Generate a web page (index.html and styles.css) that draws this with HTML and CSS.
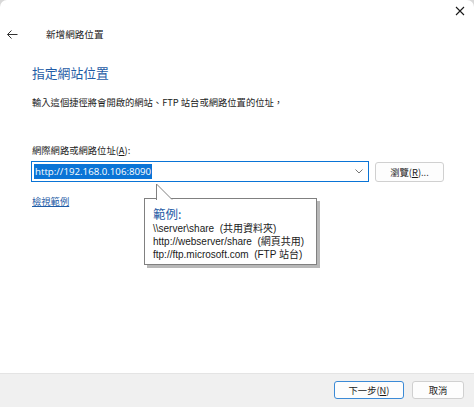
FILE: index.html
```html
<!DOCTYPE html>
<html lang="zh-Hant">
  <head>
    <meta charset="UTF-8" />
    <meta name="viewport" content="width=device-width, initial-scale=1.0" />
    <title>新增網路位置</title>
    <link rel="stylesheet" href="styles.css">
  </head>
  <body>
    <div class="window">
      <div class="titlebar">
        <button class="close-btn" aria-label="關閉">
          <svg width="10" height="10" viewBox="0 0 10 10">
            <path d="M1 1 L9 9 M9 1 L1 9" stroke="#1a1a1a" stroke-width="1.1" fill="none" />
          </svg>
        </button>
      </div>

      <div class="nav">
        <span class="back">
          <svg width="11" height="9" viewBox="0 0 11 9">
            <path d="M0.5 4.5 H10.5 M4.5 0.5 L0.5 4.5 L4.5 8.5" stroke="#333" stroke-width="1" fill="none" />
          </svg>
        </span>
        <span class="nav-title">新增網路位置</span>
      </div>

      <main class="content">
        <h1 class="heading">指定網站位置</h1>
        <p class="desc">輸入這個捷徑將會開啟的網站、FTP 站台或網路位置的位址，</p>

        <label class="label">網際網路或網路位址(<u>A</u>):</label>
        <div class="address-row">
          <div class="combo">
            <span class="combo-text"><span class="sel">http://192.168.0.106:8090</span></span>
            <svg class="chevron" width="8" height="5" viewBox="0 0 8 5">
              <path d="M0.5 0.5 L4 4 L7.5 0.5" stroke="#777" stroke-width="1" fill="none" />
            </svg>
          </div>
          <button class="btn browse">瀏覽(<u>R</u>)...</button>
        </div>

        <a class="examples-link" href="#">檢視範例</a>

        <div class="tip">
          <svg class="tip-arrow" width="30" height="17" viewBox="0 0 30 17">
            <path d="M12.5 17 V1 L28 16.5" fill="#fff" stroke="#808080" stroke-width="1" />
          </svg>
          <div class="tip-title">範例:</div>
          <div class="tip-line">\\server\share&nbsp;&nbsp;(共用資料夾)</div>
          <div class="tip-line">http://webserver/share&nbsp;&nbsp;(網頁共用)</div>
          <div class="tip-line">ftp://ftp.microsoft.com&nbsp;&nbsp;(FTP 站台)</div>
        </div>
      </main>

      <footer class="footer">
        <button class="btn btn-default">下一步(<u>N</u>)</button>
        <button class="btn">取消</button>
      </footer>
    </div>
  </body>
</html>
```

FILE: styles.css
```css
* {
  margin: 0;
  padding: 0;
  box-sizing: border-box;
}

body {
  font-family: 'Noto Sans', 'Noto Sans CJK TC', sans-serif;
  background: #d8d8d8;
  color: #1a1a1a;
  width: 474px;
  height: 407px;
  overflow: hidden;
}

.window {
  position: relative;
  display: flex;
  flex-direction: column;
  height: 407px;
  background: #fff;
  border-radius: 7px 7px 0 0;
  overflow: hidden;
}

.titlebar {
  display: flex;
  justify-content: flex-end;
  height: 22px;
  padding: 6px 9px 0 0;
}

.close-btn {
  border: none;
  background: none;
  width: 10px;
  height: 10px;
  line-height: 0;
}

.nav {
  display: flex;
  align-items: center;
  height: 24px;
  padding-left: 7px;
}

.back {
  width: 39px;
  line-height: 0;
}

.nav-title {
  font-family: 'Noto Sans CJK TC', sans-serif;
  font-size: 9.6px;
  color: #222;
}

.content {
  position: relative;
  flex: 1;
  padding: 18px 0 0 32px;
}

.heading {
  font-family: 'Noto Sans CJK TC', sans-serif;
  font-size: 12.8px;
  font-weight: normal;
  color: #1f5ca6;
  line-height: 18px;
}

.desc {
  font-family: 'Noto Sans CJK TC', sans-serif;
  font-size: 9.3px;
  line-height: 14px;
  margin-top: 13px;
}

.label {
  display: block;
  font-family: 'Noto Sans CJK TC', sans-serif;
  font-size: 9.3px;
  line-height: 14px;
  margin-top: 34px;
}

.address-row {
  display: flex;
  align-items: center;
  gap: 6px;
  margin-top: 4px;
  margin-left: -1px;
}

.combo {
  display: flex;
  align-items: center;
  justify-content: space-between;
  width: 338px;
  height: 21px;
  border: 1px solid #0a74d6;
  padding: 0 5px 0 2px;
}

.combo-text {
  font-family: 'Open Sans', sans-serif;
  font-size: 9.7px;
  line-height: 13px;
}

.sel {
  background: #0a74d6;
  color: #fff;
  padding: 1px 1px;
}

.btn {
  font-family: 'Noto Sans CJK TC', sans-serif;
  font-size: 9.3px;
  color: #1a1a1a;
  background: #fdfdfd;
  border: 1px solid #d0d0d0;
  border-radius: 3px;
  height: 20px;
  cursor: pointer;
}

.browse {
  width: 69px;
}

.examples-link {
  display: inline-block;
  font-family: 'Noto Sans CJK TC', sans-serif;
  font-size: 9.3px;
  color: #1f5ca6;
  margin-top: 12px;
}

.tip {
  position: absolute;
  left: 144px;
  top: 152px;
  width: 173px;
  height: 67px;
  background: #fff;
  border: 1px solid #808080;
  box-shadow: 3px 3px 0 #b8b8b8;
  padding: 7px 0 0 8px;
}

.tip-arrow {
  position: absolute;
  left: -1px;
  top: -16px;
}

.tip-title {
  font-family: 'Noto Sans CJK TC', sans-serif;
  font-size: 12.5px;
  color: #1f5ca6;
  line-height: 16px;
}

.tip-line {
  font-family: 'Liberation Sans', 'Noto Sans CJK TC', sans-serif;
  font-size: 10px;
  line-height: 13px;
  white-space: nowrap;
}

.footer {
  display: flex;
  justify-content: flex-end;
  align-items: center;
  gap: 8px;
  height: 34px;
  padding: 0 10px 2px 0;
  background: #f0f0f0;
  border-top: 1px solid #e4e4e4;
}

.footer .btn {
  width: 52px;
  height: 18px;
}

.footer .btn-default {
  width: 70px;
  border: 1px solid #3b8ad6;
}
```
